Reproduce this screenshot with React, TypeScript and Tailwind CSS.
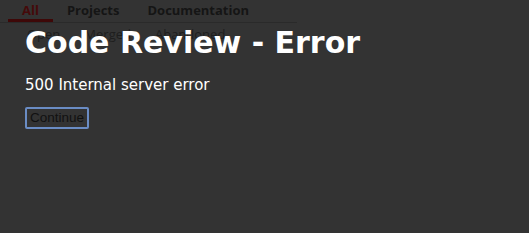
import React from 'react';

const tabs = ['All', 'Projects', 'Documentation'];
const subTabs = ['Open', 'Merged', 'Abandoned'];

const App = () => {
  return (
    <div className="w-[529px] h-[233px] bg-[#333333] overflow-hidden font-['DejaVu_Sans',sans-serif]">
      <div className="w-[297px] border-b border-[#2a2a2a]">
        <nav className="flex pl-[8px] h-[22px] font-['Open_Sans',sans-serif]">
          {tabs.map((t, i) => (
            <div
              key={t}
              className={`px-[14px] pt-[1px] text-[13px] font-bold leading-[18px] ${
                i === 0 ? 'text-[#450a0a] border-b-[3px] border-[#3e0808]' : 'text-[#151515]'
              }`}
            >
              {t}
            </div>
          ))}
        </nav>
      </div>
      <div className="flex gap-[24px] pl-[27px] pt-[2px] text-[13px] leading-[18px] text-[#1e1e1e] font-['Open_Sans',sans-serif]">
        {subTabs.map((s) => (
          <span key={s}>{s}</span>
        ))}
      </div>
      <div className="px-[25px] -mt-[20px] relative">
        <h1 className="text-[30px] font-bold leading-[40px] text-white">Code Review - Error</h1>
        <p className="mt-[12px] text-[15px] leading-[20px] text-white">500 Internal server error</p>
        <button className="mt-[12px] h-[22px] w-[64px] border-2 border-[#6a8cc4] rounded-[2px] bg-[#333] text-[13.5px] text-[#111] font-['Liberation_Sans',sans-serif] leading-none">
          Continue
        </button>
      </div>
    </div>
  );
};

export default App;
